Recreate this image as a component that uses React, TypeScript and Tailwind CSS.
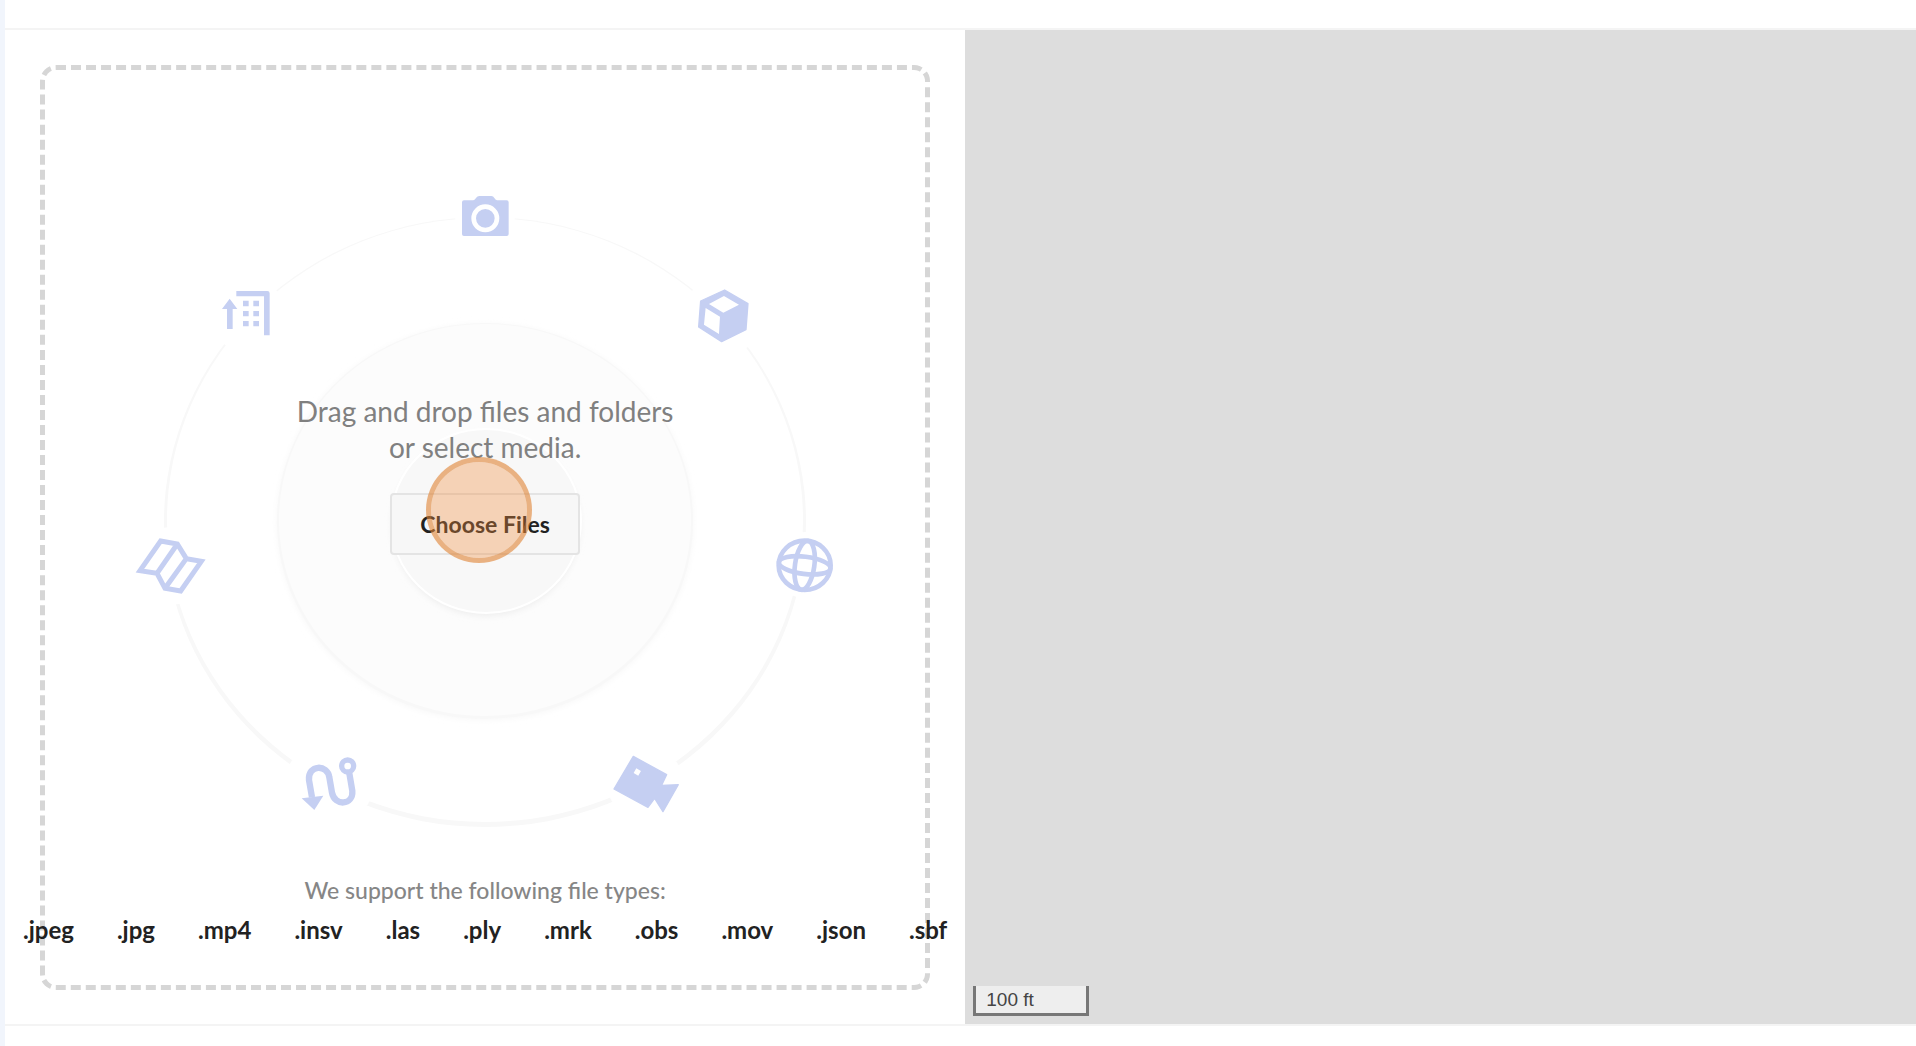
import React from 'react'

const fileTypes = ['.jpeg', '.jpg', '.mp4', '.insv', '.las', '.ply', '.mrk', '.obs', '.mov', '.json', '.sbf']

function MediaRings() {
  return (
    <svg className="col-start-1 row-start-1 w-[710px] max-w-full" viewBox="130 180 710 660" aria-hidden="true">
      <defs>
        <filter id="soft" x="-20%" y="-20%" width="140%" height="140%">
          <feGaussianBlur stdDeviation="3" />
        </filter>
      </defs>

      {/* outer ring, heavier at the bottom */}
      <ellipse cx="485" cy="522" rx="321" ry="305" fill="#f8f8f8" />
      <ellipse cx="485" cy="520" rx="318" ry="302" fill="#fff" />

      {/* middle disc */}
      <ellipse cx="485" cy="522" rx="208" ry="198" fill="#f8f8f8" filter="url(#soft)" />
      <ellipse cx="485" cy="521" rx="208" ry="198" fill="#f8f8f8" />
      <ellipse cx="485" cy="520" rx="206" ry="196" fill="#fcfcfc" />

      {/* inner disc */}
      <ellipse cx="486" cy="525" rx="94" ry="91" fill="#eeeeee" filter="url(#soft)" />
      <ellipse cx="486" cy="521" rx="95" ry="92" fill="#f8f8f8" stroke="#fff" strokeWidth="2" />

      {/* gaps in the ring around each icon */}
      <g fill="#fff">
        <circle cx="485" cy="216" r="30" />
        <circle cx="723" cy="316" r="40" />
        <circle cx="805" cy="565" r="33" />
        <circle cx="645" cy="783" r="38" />
        <circle cx="330" cy="782" r="44" />
        <circle cx="171" cy="566" r="39" />
        <circle cx="247" cy="314" r="38" />
      </g>

      {/* photo */}
      <g transform="translate(420 170) scale(0.3333)">
        <path d="M132 91H160Q165 90 168 84Q172 78 178 78H214Q220 78 223 84Q226 90 231 91H260Q266 91 266 97V192Q266 198 260 198H132Q126 198 126 192V97Q126 91 132 91Z" fill="#c5cff2" />
        <circle cx="196" cy="145" r="35" fill="none" stroke="#fff" strokeWidth="14" />
      </g>

      {/* 3d model */}
      <g transform="translate(420 170) scale(0.3333)">
        <path d="M914 360L984 401L978 479L905 515L836 471L842 393Z" fill="#c5cff2" stroke="#c5cff2" strokeWidth="4" strokeLinejoin="round" />
        <path d="M912 378L957 404L910 428L867 402ZM857 414L900 440L897 492L852 464Z" fill="#fff" />
      </g>

      {/* facade */}
      <g transform="translate(180 260) scale(0.3333)" fill="#c5cff2">
        <path d="M126 147L149 116L172 147H158V207H141V147Z" />
        <path d="M169 93H262Q269 93 269 100V226H252V109H169Z" />
        <path d="M189 122h17v17h-17zM220 122h17v17h-17zM189 153h17v16h-17zM220 153h17v16h-17zM189 183h17v16h-17zM220 183h17v16h-17z" />
      </g>

      {/* map */}
      <g transform="translate(110 510) scale(0.3333)" fill="none" stroke="#c5cff2" strokeWidth="15">
        <path d="M152 93L202 102L229 146L274 154L212 243L165 235L141 190L90 182ZM202 102L141 190M229 146L165 235" />
      </g>

      {/* route */}
      <g transform="translate(270 720) scale(0.3333)">
        <path d="M126 232L117 180C113 133 173 132 178 172L186 218C194 260 250 256 247 213L238 160" fill="none" stroke="#c5cff2" strokeWidth="19" />
        <circle cx="233" cy="138" r="18" fill="none" stroke="#c5cff2" strokeWidth="16" />
        <path d="M95 235L160 227L133 270Z" fill="#c5cff2" />
      </g>

      {/* video */}
      <g transform="translate(270 720) scale(0.3333)">
        <path d="M1090 109L1190 164L1175 196L1225 194L1179 275L1154 235L1134 262L1032 207Z" fill="#c5cff2" stroke="#c5cff2" strokeWidth="4" strokeLinejoin="round" />
        <rect x="1094" y="148" width="16" height="16" fill="#fff" transform="rotate(30 1102 156)" />
      </g>

      {/* 360 */}
      <g transform="translate(740 500) scale(0.3333)" fill="none" stroke="#c5cff2" strokeWidth="14">
        <ellipse cx="194" cy="196" rx="78" ry="74" />
        <ellipse cx="194" cy="196" rx="29" ry="74" transform="rotate(8 194 196)" />
        <ellipse cx="194" cy="196" rx="78" ry="26" transform="rotate(7 194 196)" />
      </g>
    </svg>
  )
}

function DropZone() {
  return (
    <section className="px-[35px] pt-[35px] pb-[34px]">
      <div className="rounded-2xl border-[5px] border-dashed border-[#d6d6d6] pt-[110px] pb-[41px]">
        <div className="grid justify-items-center">
          <MediaRings />
          <div className="relative col-start-1 row-start-1 flex flex-col items-center pt-[213px]">
            <p className="text-center text-[28px] leading-9 text-[#808080]">
              Drag and drop files and folders
              <br />
              or select media.
            </p>
            <button type="button" className="mt-7 h-[62px] w-[190px] rounded-sm border-2 border-[#e4e4e4] bg-[#f7f7f7] text-[23px] font-bold text-[#222]">
              Choose Files
            </button>
            {/* click marker */}
            <span className="pointer-events-none absolute top-[277px] left-1/2 -ml-[59px] size-[106px] rounded-full border-5 border-[#e08232]/60 bg-[#f08c3c]/35 bg-clip-padding" />
          </div>
        </div>
        <p className="mt-9 text-center text-[23px] leading-7 font-medium text-[#868686]">We support the following file types:</p>
        <ul className="-mx-[22px] mt-3 flex justify-between text-[24px] leading-7 font-bold text-[#222]">
          {fileTypes.map((type) => (
            <li key={type}>{type}</li>
          ))}
        </ul>
      </div>
    </section>
  )
}

export default function App() {
  return (
    <div className="flex min-h-screen bg-white font-['Lato','Liberation_Sans',sans-serif]">
      <div className="w-[5px] shrink-0 bg-[#f1f5fc]" />
      <div className="flex grow flex-col">
        <header className="h-[30px] border-b-2 border-[#f4f4f4]" />
        <main className="grid grid-cols-[101fr_100fr]">
          <DropZone />
          <section className="flex items-end bg-[#dddddd] p-2" aria-label="Map">
            <div className="h-[30px] w-[116px] border-3 border-t-0 border-[#777] bg-[#eeeeee] pl-[10px] font-['Liberation_Sans',sans-serif] text-[19px] leading-7 text-[#444]">
              100 ft
            </div>
          </section>
        </main>
        <footer className="grow border-t-2 border-[#f4f4f4]" />
      </div>
    </div>
  )
}
